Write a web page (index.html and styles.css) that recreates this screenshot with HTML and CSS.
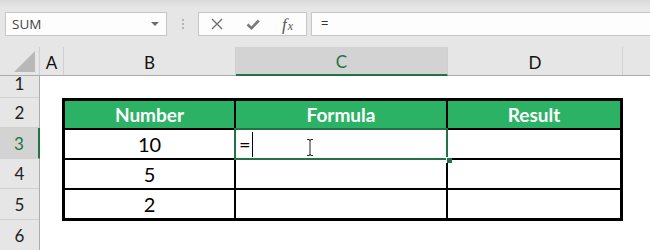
FILE: index.html
```html
<!DOCTYPE html>
<html lang="en">
<head>
    <meta charset="UTF-8">
    <title>SUM formula</title>
    <link rel="stylesheet" href="styles.css">
</head>
<body>
    <div class="toolbar">
        <div class="namebox">
            <span>SUM</span>
            <span class="dropdown"></span>
        </div>
        <div class="grip"><i></i><i></i><i></i></div>
        <div class="fxbox">
            <svg class="icon-x" width="12" height="12" viewBox="0 0 12 12">
                <path d="M1 1 L11 11 M11 1 L1 11" stroke="#6f6f6f" stroke-width="1.4" fill="none"/>
            </svg>
            <svg class="icon-check" width="14" height="11" viewBox="0 0 14 11">
                <path d="M1.5 5.5 L5.5 9.2 L12.8 1.5" stroke="#7a7a7a" stroke-width="2.6" fill="none"/>
            </svg>
            <span class="fx">f<span class="fx-x">x</span></span>
        </div>
        <div class="formula">=</div>
    </div>

    <div class="colheads">
        <div class="corner"><span class="triangle"></span></div>
        <div class="ch col-a">A</div>
        <div class="ch col-b">B</div>
        <div class="ch col-c selected">C</div>
        <div class="ch col-d">D</div>
        <div class="ch col-e"></div>
    </div>

    <div class="main">
        <div class="rowheads">
            <div class="rh row-1">1</div>
            <div class="rh row-2">2</div>
            <div class="rh row-3 selected">3</div>
            <div class="rh row-4">4</div>
            <div class="rh row-5">5</div>
            <div class="rh row-6">6</div>
        </div>
        <div class="cells">
            <div class="data">
                <div class="cell head">Number</div>
                <div class="cell head">Formula</div>
                <div class="cell head">Result</div>

                <div class="cell">10</div>
                <div class="cell active">=<span class="caret"></span>
                    <svg class="ibeam" width="8" height="17" viewBox="0 0 8 17">
                        <path d="M1 0.5 H3 Q4 0.5 4 2 V15 Q4 16.5 3 16.5 H1 M7 0.5 H5 Q4 0.5 4 2 M4 15 Q4 16.5 5 16.5 H7" stroke="#222" stroke-width="1" fill="none"/>
                    </svg>
                </div>
                <div class="cell"></div>

                <div class="cell">5</div>
                <div class="cell"></div>
                <div class="cell"></div>

                <div class="cell">2</div>
                <div class="cell"></div>
                <div class="cell"></div>
            </div>
        </div>
    </div>
</body>
</html>
```

FILE: styles.css
```css
body {
    margin: 0;
    width: 650px;
    height: 250px;
    overflow: hidden;
    background: #fff;
    font-family: Lato, "Open Sans", sans-serif;
}

/* formula bar */
.toolbar {
    height: 47px;
    box-sizing: border-box;
    padding: 12px 0 0 5px;
    display: flex;
    align-items: flex-start;
    background: linear-gradient(#d9d9d9 0, #e6e6e6 7px);
}
.namebox {
    width: 162px;
    height: 24px;
    box-sizing: border-box;
    border: 1px solid #c6c6c6;
    background: #fdfdfd;
    display: flex;
    align-items: center;
    justify-content: space-between;
    padding: 0 7px 0 6px;
    font-family: "Open Sans", sans-serif;
    font-size: 13.5px;
    color: #444;
}
.dropdown {
    width: 0;
    height: 0;
    border-left: 4px solid transparent;
    border-right: 4px solid transparent;
    border-top: 4px solid #6d6d6d;
}
.grip {
    width: 31px;
    height: 24px;
    display: flex;
    flex-direction: column;
    align-items: center;
    justify-content: center;
    gap: 2px;
}
.grip i {
    width: 2px;
    height: 2px;
    background: #b5b5b5;
}
.fxbox {
    width: 109px;
    height: 24px;
    box-sizing: border-box;
    border: 1px solid #c6c6c6;
    background: #fdfdfd;
    display: flex;
    align-items: center;
    padding-left: 12px;
}
.icon-check {
    margin-left: 23px;
}
.fx {
    margin-left: 22px;
    font-family: "Liberation Serif", serif;
    font-style: italic;
    font-size: 17px;
    color: #555;
    line-height: 1;
}
.fx-x {
    font-size: 12px;
    margin-left: 1px;
}
.formula {
    flex: 1;
    margin-left: 4px;
    height: 24px;
    box-sizing: border-box;
    border: 1px solid #c6c6c6;
    border-right: none;
    background: #fdfdfd;
    padding-left: 9px;
    font-family: "Open Sans", sans-serif;
    font-size: 13px;
    line-height: 21px;
    color: #333;
}

/* column headers */
.colheads {
    display: flex;
    height: 28px;
    background: #e6e6e6;
    border-bottom: 1px solid #ababab;
}
.corner {
    width: 40px;
    box-sizing: border-box;
    border-right: 1px solid #d0d0d0;
    position: relative;
}
.triangle {
    position: absolute;
    right: 4px;
    bottom: 3px;
    width: 0;
    height: 0;
    border-left: 21px solid transparent;
    border-bottom: 21px solid #b8b8b8;
}
.ch {
    box-sizing: border-box;
    border-right: 1px solid #d0d0d0;
    display: flex;
    align-items: center;
    justify-content: center;
    font-size: 17px;
    color: #111;
    padding-top: 2px;
}
.col-a { width: 24px; }
.col-b { width: 172px; }
.col-c { width: 212px; }
.col-d { width: 175px; }
.col-e { flex: 1; border-right: none; }
.ch.selected {
    background: #d3d3d3;
    color: #217346;
    border-bottom: 2px solid #217346;
    margin-bottom: -1px;
}

/* row headers and cells */
.main {
    display: flex;
}
.rowheads {
    width: 40px;
    flex-shrink: 0;
    background: #e6e6e6;
    border-right: 1px solid #ababab;
    box-sizing: border-box;
}
.rh {
    box-sizing: border-box;
    border-bottom: 1px solid #d0d0d0;
    display: flex;
    align-items: center;
    justify-content: center;
    font-size: 17px;
    color: #222;
    height: 30px;
}
.row-1 {
    height: 22px;
    padding-bottom: 6px;
}
.row-3, .row-5, .row-6 {
    height: 31px;
}
.rh.selected {
    background: #d3d3d3;
    color: #217346;
    border-right: 2px solid #217346;
    margin-right: -1px;
}

.cells {
    flex: 1;
    padding: 22px 0 0 22px;
}
.data {
    display: grid;
    grid-template-columns: 169px 210px 172px;
    grid-template-rows: 27px 28px 28px 28px;
    gap: 2px;
    width: fit-content;
    background: #000;
    border: 3px solid #000;
}
.cell {
    background: #fff;
    display: flex;
    align-items: center;
    justify-content: center;
    font-size: 20px;
    color: #000;
}
.cell.head {
    background: #2bb265;
    color: #fff;
    font-weight: bold;
    font-size: 19px;
}
.cell.active {
    justify-content: flex-start;
    padding-left: 3px;
    position: relative;
    outline: 2px solid #217346;
    z-index: 1;
}
.caret {
    display: inline-block;
    width: 0;
    height: 25px;
    border-left: 1.5px solid #000;
    margin-left: 1px;
}
.cell.active::after {
    content: "";
    position: absolute;
    right: -6px;
    bottom: -5px;
    width: 5px;
    height: 5px;
    background: #217346;
    border-left: 1px solid #fff;
    border-top: 1px solid #fff;
}
.ibeam {
    position: absolute;
    left: 70px;
    top: 9px;
}
```
